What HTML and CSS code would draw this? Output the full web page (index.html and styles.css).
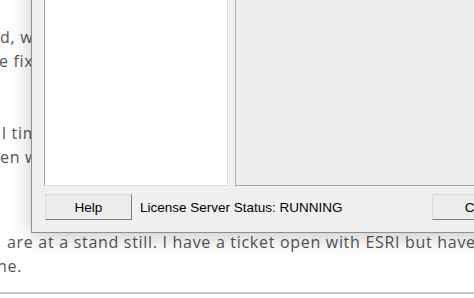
FILE: index.html
```html
<!DOCTYPE html>
<html>
<head>
<meta charset="utf-8">
<link rel="stylesheet" href="styles.css">
</head>
<body>
<div class="article">
  <div class="para p1">
    <div class="line l1">d, we can't get anything done</div>
    <div class="line l2">e fix is released.</div>
  </div>
  <div class="para p2">
    <div class="line l3">l time and</div>
    <div class="line l4">en we open the license manager</div>
  </div>
  <div class="para p3">
    <div class="line l5">are at a stand still. I have a ticket open with ESRI but have</div>
    <div class="line l6">ne.</div>
  </div>
  <div class="rule"></div>
</div>

<div class="dialog">
  <div class="top-row">
    <div class="listbox"></div>
    <div class="panel"></div>
  </div>
  <div class="button-row">
    <button class="btn help">Help</button>
    <span class="status">License Server Status: RUNNING</span>
    <button class="btn close">Close</button>
  </div>
</div>
</body>
</html>
```

FILE: styles.css
```css
html, body {
  margin: 0;
  padding: 0;
  background: #ffffff;
  overflow: hidden;
  width: 474px;
  height: 298px;
}

.article {
  font-family: "Open Sans", "DejaVu Sans", sans-serif;
  font-size: 16px;
  letter-spacing: 0.7px;
  line-height: 24px;
  color: #555555;
  padding-top: 25px;
}

.line {
  white-space: nowrap;
}

.p1 { margin-bottom: 48px; }
.p2 { margin-bottom: 61px; }

.l1 { margin-left: 0; }
.l2 { margin-left: -1px; }
.l3 { margin-left: 2px; }
.l4 { margin-left: 0; }
.l5 { margin-left: 7px; }
.l6 { margin-left: -3px; }

.rule {
  margin-top: 14px;
  height: 2px;
  background: #c8c8c8;
}

/* overlay window */
.dialog {
  position: absolute;
  left: 31px;
  top: -40px;
  width: 488px;
  padding: 10px 11px 12px 12px;
  background: #f0f0f0;
  border: 1px solid #8e8e8e;
  box-shadow: 0 4px 20px rgba(0, 0, 0, 0.22);
  display: flex;
  flex-direction: column;
  gap: 8px;
  font-family: "Liberation Sans", Arial, sans-serif;
  font-size: 13.5px;
  color: #000;
}

.top-row {
  display: flex;
  gap: 7px;
  height: 215px;
}

.listbox {
  width: 182px;
  background: #ffffff;
  border-style: solid;
  border-width: 1px;
  border-color: #a6a6a6 #dcdcdc #dcdcdc #a6a6a6;
}

.panel {
  flex: 1;
  background: #eeeeee;
  border-style: solid;
  border-width: 1px;
  border-color: #e2e2e2 #d6d6d6 #a3a3a3 #b4b4b4;
}

.button-row {
  display: flex;
  align-items: center;
  height: 26px;
}

.btn {
  font-family: "Liberation Sans", Arial, sans-serif;
  font-size: 13.5px;
  color: #000;
  height: 26px;
  padding: 0;
  background: #ececec;
  border-style: solid;
  border-width: 1px;
  border-color: #dadada #7c7c7c #7c7c7c #dadada;
  border-radius: 0;
}

.help {
  width: 87px;
  margin-left: 1px;
}

.status {
  flex: 1;
  margin-left: 8px;
  padding-top: 1px;
}

.close {
  width: 100px;
}
```
